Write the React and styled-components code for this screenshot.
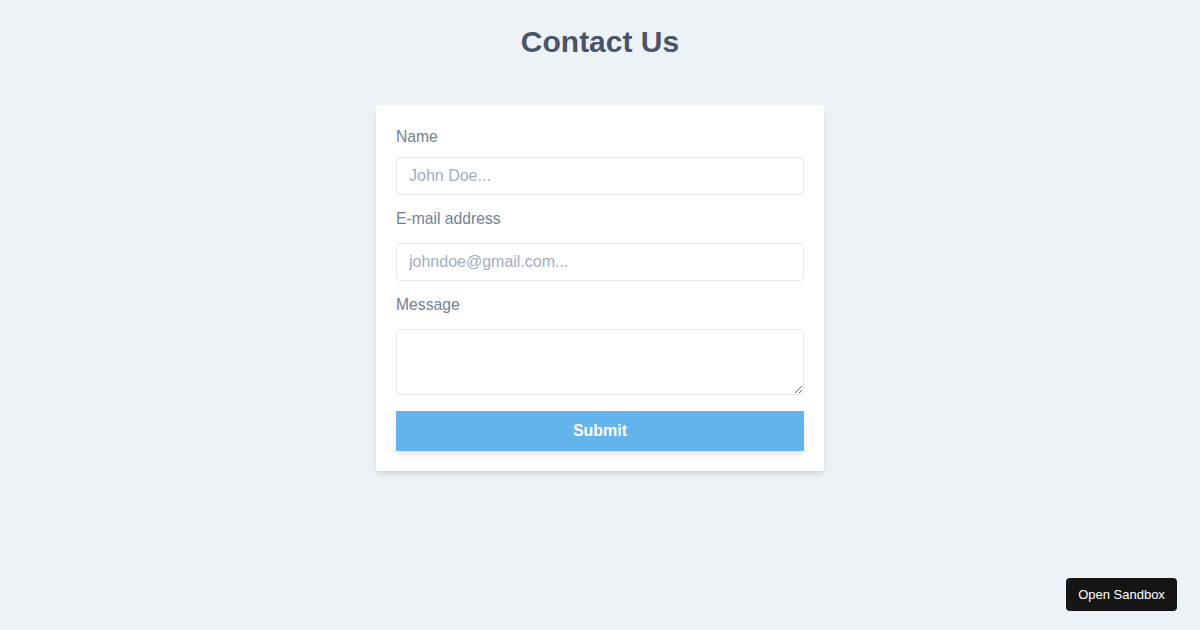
import styled, { createGlobalStyle } from "styled-components";

const GlobalStyle = createGlobalStyle`
  html, body {
    margin: 0;
    padding: 0;
    background: #edf2f7;
    font-family: "Liberation Sans", Arial, sans-serif;
  }
  * {
    box-sizing: border-box;
  }
`;

const Page = styled.div`
  min-height: 630px;
  display: flex;
  flex-direction: column;
  align-items: center;
  padding-top: 24px;
`;

const Title = styled.h1`
  margin: 0;
  font-size: 30px;
  line-height: 36px;
  font-weight: 700;
  color: #4a5568;
`;

const Card = styled.form`
  margin-top: 45px;
  width: 448px;
  background: #fff;
  padding: 20px;
  display: flex;
  flex-direction: column;
  box-shadow: 0 4px 6px -1px rgba(0, 0, 0, 0.1), 0 2px 4px -1px rgba(0, 0, 0, 0.06);
`;

const Label = styled.label`
  display: block;
  font-size: 15.7px;
  line-height: 22px;
  color: #718096;
  margin-top: ${(p) => p.$top || 1}px;
  margin-bottom: ${(p) => p.$bottom || 9}px;
`;

const Input = styled.input`
  display: block;
  width: 100%;
  height: 38px;
  padding: 0 12px;
  font-family: inherit;
  font-size: 16px;
  color: #4a5568;
  border: 1px solid #e2e8f0;
  border-radius: 4px;
  outline: none;
  &::placeholder {
    color: #a0aec0;
  }
`;

const TextArea = styled.textarea`
  display: block;
  width: 100%;
  height: 66px;
  padding: 8px 12px;
  font-family: inherit;
  font-size: 16px;
  border: 1px solid #e2e8f0;
  border-radius: 4px;
  outline: none;
`;

const Submit = styled.button`
  margin-top: 16px;
  height: 40px;
  width: 100%;
  border: none;
  background: #63b3ed;
  color: #fff;
  font-family: inherit;
  font-size: 16px;
  font-weight: 700;
  cursor: pointer;
  box-shadow: 0 4px 6px -1px rgba(0, 0, 0, 0.1), 0 2px 4px -1px rgba(0, 0, 0, 0.06);
`;

const SandboxButton = styled.button`
  position: fixed;
  right: 23px;
  bottom: 19px;
  width: 111px;
  height: 33px;
  border: none;
  border-radius: 4px;
  background: #151515;
  color: #fff;
  font-family: "Liberation Sans", Arial, sans-serif;
  font-size: 13px;
  cursor: pointer;
`;

export default function App() {
  return (
    <>
      <GlobalStyle />
      <Page>
        <Title>Contact Us</Title>
        <Card onSubmit={(e) => e.preventDefault()}>
          <Label htmlFor="name">Name</Label>
          <Input id="name" placeholder="John Doe..." />
          <Label htmlFor="email" $top={13} $bottom={13}>
            E-mail address
          </Label>
          <Input id="email" placeholder="johndoe@gmail.com..." />
          <Label htmlFor="message" $top={13} $bottom={13}>
            Message
          </Label>
          <TextArea id="message" />
          <Submit type="submit">Submit</Submit>
        </Card>
      </Page>
      <SandboxButton>Open Sandbox</SandboxButton>
    </>
  );
}
